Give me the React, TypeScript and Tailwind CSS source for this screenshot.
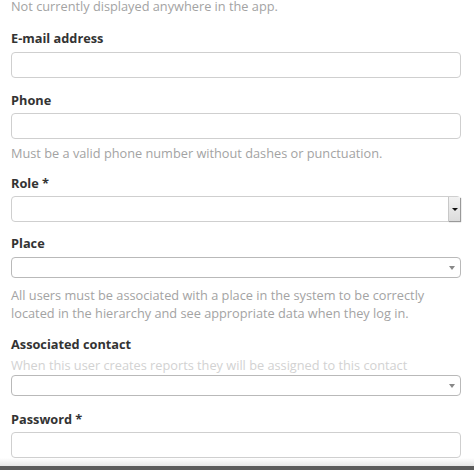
import React from "react";

const Label = ({ children, className = "" }: { children: React.ReactNode; className?: string }) => (
  <div className={`text-[12.75px] leading-[20px] font-bold text-[#333] ${className}`}>{children}</div>
);

const Help = ({ children, className = "" }: { children: React.ReactNode; className?: string }) => (
  <div className={`text-[12.75px] leading-[18px] text-[#a3a3a3] ${className}`}>{children}</div>
);

const Input = ({ className = "" }: { className?: string }) => (
  <div className={`h-[26px] rounded-[4px] border border-[#cfcfcf] bg-white ${className}`} />
);

const Select = ({ className = "" }: { className?: string }) => (
  <div className={`h-[21px] rounded-[4px] border border-[#b9b9b9] bg-white flex items-center justify-end pr-[5px] ${className}`}>
    <div className="w-0 h-0 border-l-[3.5px] border-r-[3.5px] border-t-[4px] border-l-transparent border-r-transparent border-t-[#888]" />
  </div>
);

export default function App() {
  return (
    <div className="w-[474px] h-[470px] overflow-hidden bg-white font-['Open_Sans',sans-serif] flex flex-col">
      <div className="flex-1 pl-[11px] pr-[13px]">
        <Help className="-mt-[4px] leading-[20px]">Not currently displayed anywhere in the app.</Help>
        <Label className="mt-[12px]">E-mail address</Label>
        <Input className="mt-[4px]" />
        <Label className="mt-[12px]">Phone</Label>
        <Input className="mt-[3px]" />
        <Help className="mt-[4px] leading-[20px]">Must be a valid phone number without dashes or punctuation.</Help>
        <Label className="mt-[10px]">Role *</Label>
        <div className="mt-[3px] h-[26px] rounded-[4px] border border-[#cfcfcf] bg-white flex justify-end">
          <div className="w-[12px] h-full bg-gradient-to-b from-[#f2f2f2] to-[#dcdcdc] border-l border-[#c8c8c8] shadow-[1px_1px_1px_#999] flex items-center justify-center">
            <div className="w-0 h-0 border-l-[3px] border-r-[3px] border-t-[3px] border-l-transparent border-r-transparent border-t-[#111]" />
          </div>
        </div>
        <Label className="mt-[11px]">Place</Label>
        <Select className="mt-[4px]" />
        <Help className="mt-[8px]">
          All users must be associated with a place in the system to be correctly located in the hierarchy and see appropriate data when they log in.
        </Help>
        <Label className="mt-[12px]">Associated contact</Label>
        <Help className="mt-[2px] text-[#d2d2d2]">When this user creates reports they will be assigned to this contact</Help>
        <Select className="mt-[1px]" />
        <Label className="mt-[13px]">Password *</Label>
        <Input className="mt-[3px] h-[25px]" />
      </div>
      <div className="h-[8px] bg-gradient-to-b from-white to-[#e6e6e6]" />
      <div className="h-[4px] bg-[#5b5b5b]" />
    </div>
  );
}
